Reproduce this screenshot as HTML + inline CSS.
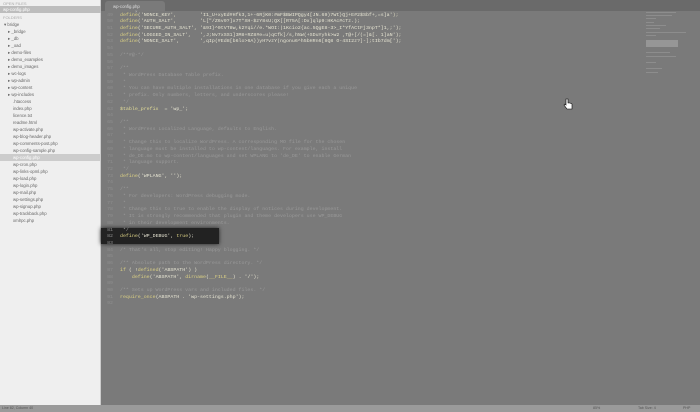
<!DOCTYPE html>
<html><head><meta charset="utf-8"><style>
*{margin:0;padding:0;box-sizing:border-box}
body{width:700px;height:412px;overflow:hidden;background:#7a7a7a;font-family:"Liberation Sans",sans-serif;position:relative}
#side{position:absolute;left:0;top:0;width:101px;height:405px;background:#efefef;border-right:1px solid #ccc}
.sh{font-size:4px;color:#aaa;position:absolute;left:3px}
.it{position:absolute;font-size:4.3px;color:#666;white-space:nowrap;height:7px;line-height:7px}
.sel{background:#ccc;left:0!important;width:101px;padding-left:13px}
#tabs{position:absolute;left:101px;top:0;width:599px;height:11px;background:#6a6a6a}
#tab{position:absolute;left:4px;top:1px;width:60px;height:10px;background:#7a7a7a;border-radius:3px 3px 0 0;font-size:4.3px;color:#ddd;padding:3px 0 0 8px}
#code{position:absolute;left:101px;top:12.5px;font-family:"Liberation Mono",monospace;font-size:4.95px;line-height:6.72px;white-space:pre;color:#dedac0}
.ln{display:inline-block;width:12px;text-align:right;color:#8e8e8e;margin-right:7px}
.k{color:#dcd184}.c{color:#999}.v{color:#e2dc98}.s{color:#e6e4d2}
#hl{position:absolute;left:101px;top:228px;width:118px;height:16px;background:#222;box-shadow:0 0 4px #222}
#map{position:absolute;left:646px;top:12px;width:44px;height:70px;opacity:.6}
#status{position:absolute;left:0;top:405px;width:700px;height:7px;background:#9a9a9a;font-size:3.6px;color:#555;line-height:7px}
</style></head><body>
<div id="side">
<div class="sh" style="top:1px">OPEN FILES</div>
<div class="it sel" style="top:6px;padding-left:3px;color:#fff;background:#bdbdbd">wp-config.php</div>
<div class="sh" style="top:15px">FOLDERS</div>
<div class="it" style="left:4px;top:21px">▾ bridge</div>
<div class="it" style="left:8px;top:28px">▸ _bridge</div>
<div class="it" style="left:8px;top:35px">▸ _db</div>
<div class="it" style="left:8px;top:42px">▸ _oad</div>
<div class="it" style="left:8px;top:49px">▸ demo-files</div>
<div class="it" style="left:8px;top:56px">▸ demo_examples</div>
<div class="it" style="left:8px;top:63px">▸ demo_images</div>
<div class="it" style="left:8px;top:70px">▸ wc-logs</div>
<div class="it" style="left:8px;top:77px">▸ wp-admin</div>
<div class="it" style="left:8px;top:84px">▸ wp-content</div>
<div class="it" style="left:8px;top:91px">▸ wp-includes</div>
<div class="it" style="left:13px;top:98px">.htaccess</div>
<div class="it" style="left:13px;top:105px">index.php</div>
<div class="it" style="left:13px;top:112px">licence.txt</div>
<div class="it" style="left:13px;top:119px">readme.html</div>
<div class="it" style="left:13px;top:126px">wp-activate.php</div>
<div class="it" style="left:13px;top:133px">wp-blog-header.php</div>
<div class="it" style="left:13px;top:140px">wp-comments-post.php</div>
<div class="it" style="left:13px;top:147px">wp-config-sample.php</div>
<div class="it sel" style="top:154px;color:#fff">wp-config.php</div>
<div class="it" style="left:13px;top:161px">wp-cron.php</div>
<div class="it" style="left:13px;top:168px">wp-links-opml.php</div>
<div class="it" style="left:13px;top:175px">wp-load.php</div>
<div class="it" style="left:13px;top:182px">wp-login.php</div>
<div class="it" style="left:13px;top:189px">wp-mail.php</div>
<div class="it" style="left:13px;top:196px">wp-settings.php</div>
<div class="it" style="left:13px;top:203px">wp-signup.php</div>
<div class="it" style="left:13px;top:210px">wp-trackback.php</div>
<div class="it" style="left:13px;top:217px">xmlrpc.php</div>
</div>
<div id="tabs"><div id="tab">wp-config.php <span style="margin-left:22px;color:#bbb">×</span></div></div>
<div id="hl"></div>
<div id="code"><span class="ln">49</span><span class="k">define</span>(<span class="s">'NONCE_KEY'</span>,        <span class="s">'I1_U+xyEd#Hfk3,1+-6RjK0:#mF$BWIPQgy4[JN.69)7Wt}Qj+E#2$Sbf+,=s]a'</span>);
<span class="ln">50</span><span class="k">define</span>(<span class="s">'AUTH_SALT'</span>,        <span class="s">'L["/Z6v9?]x7T*XH-$zY8sU;QX[[R75A[:Dx]qlp9:HKAc#cTz.<K9cIH=P[S-zZ'</span>);
<span class="ln">51</span><span class="k">define</span>(<span class="s">'SECURE_AUTH_SALT'</span>, <span class="s">'&9I}^0tVT8w,k2Yqi//e.*WOI:|1Kcio2{ac.5QgE8-3>_I*YfACtFj3npT*]1,;'</span>);
<span class="ln">52</span><span class="k">define</span>(<span class="s">'LOGGED_IN_SALT'</span>,   <span class="s">',J;Nv7xSS1]3M8+RZ8#e=u)qCfk]/s,h%W(+SDuYyhk>w2 ,T@+[/(=]&[. 1]aN'</span>);
<span class="ln">53</span><span class="k">define</span>(<span class="s">'NONCE_SALT'</span>,       <span class="s">',qIp(#Ed8[b6lo>6A})yH?vzY(ngonu6^h5bHRn6[8Q8 O-4SI2z?]-];tIb7dm['</span>);
<span class="ln">54</span>
<span class="ln">55</span><span class="c">/**#@-*/</span>
<span class="ln">56</span>
<span class="ln">57</span><span class="c">/**</span>
<span class="ln">58</span><span class="c"> * WordPress Database Table prefix.</span>
<span class="ln">59</span><span class="c"> *</span>
<span class="ln">60</span><span class="c"> * You can have multiple installations in one database if you give each a unique</span>
<span class="ln">61</span><span class="c"> * prefix. Only numbers, letters, and underscores please!</span>
<span class="ln">62</span><span class="c"> */</span>
<span class="ln">63</span><span class="v">$table_prefix</span>  = <span class="s">'wp_'</span>;
<span class="ln">64</span>
<span class="ln">65</span><span class="c">/**</span>
<span class="ln">66</span><span class="c"> * WordPress Localized Language, defaults to English.</span>
<span class="ln">67</span><span class="c"> *</span>
<span class="ln">68</span><span class="c"> * Change this to localize WordPress. A corresponding MO file for the chosen</span>
<span class="ln">69</span><span class="c"> * language must be installed to wp-content/languages. For example, install</span>
<span class="ln">70</span><span class="c"> * de_DE.mo to wp-content/languages and set WPLANG to 'de_DE' to enable German</span>
<span class="ln">71</span><span class="c"> * language support.</span>
<span class="ln">72</span><span class="c"> */</span>
<span class="ln">73</span><span class="k">define</span>(<span class="s">'WPLANG'</span>, <span class="s">''</span>);
<span class="ln">74</span>
<span class="ln">75</span><span class="c">/**</span>
<span class="ln">76</span><span class="c"> * For developers: WordPress debugging mode.</span>
<span class="ln">77</span><span class="c"> *</span>
<span class="ln">78</span><span class="c"> * Change this to true to enable the display of notices during development.</span>
<span class="ln">79</span><span class="c"> * It is strongly recommended that plugin and theme developers use WP_DEBUG</span>
<span class="ln">80</span><span class="c"> * in their development environments.</span>
<span class="ln">81</span><span class="c"> */</span>
<span class="ln">82</span><span class="k">define</span>(<span class="s">'WP_DEBUG'</span>, <span class="k">true</span>);
<span class="ln">83</span>
<span class="ln">84</span><span class="c">/* That's all, stop editing! Happy blogging. */</span>
<span class="ln">85</span>
<span class="ln">86</span><span class="c">/** Absolute path to the WordPress directory. */</span>
<span class="ln">87</span><span class="k">if</span> ( !<span class="k">defined</span>(<span class="s">'ABSPATH'</span>) )
<span class="ln">88</span>    <span class="k">define</span>(<span class="s">'ABSPATH'</span>, <span class="k">dirname</span>(<span class="k">__FILE__</span>) . <span class="s">'/'</span>);
<span class="ln">89</span>
<span class="ln">90</span><span class="c">/** Sets up WordPress vars and included files. */</span>
<span class="ln">91</span><span class="k">require_once</span>(ABSPATH . <span class="s">'wp-settings.php'</span>);
<span class="ln">92</span>
</div>
<svg id="map" viewBox="0 0 44 70">
<g fill="#9a9a9a">
<rect x="0" y="0" width="30" height="1"/><rect x="0" y="3" width="26" height="1"/><rect x="0" y="6" width="10" height="1"/>
<rect x="0" y="10" width="8" height="1"/><rect x="0" y="13" width="20" height="1"/><rect x="0" y="16" width="14" height="1"/>
<rect x="0" y="20" width="40" height="1"/><rect x="0" y="23" width="10" height="1"/>
<rect x="0" y="40" width="24" height="1"/><rect x="0" y="44" width="30" height="1"/><rect x="0" y="50" width="10" height="1"/>
<rect x="0" y="56" width="16" height="1"/><rect x="0" y="60" width="12" height="1"/></g>
<rect x="0" y="28" width="32" height="7" fill="#aaa"/>
</svg>
<svg style="position:absolute;left:563px;top:98px" width="10" height="12" viewBox="0 0 10 12"><path d="M3 1v6l-1-1-1 1 3 4h5V6L7 5 5 5V1z" fill="#fff" stroke="#000" stroke-width=".6"/></svg>
<div id="status"><span style="margin-left:2px">Line 82, Column 40</span><span style="position:absolute;left:593px">85%</span><span style="position:absolute;left:638px">Tab Size: 4</span><span style="position:absolute;left:683px">PHP</span></div>
</body></html>
